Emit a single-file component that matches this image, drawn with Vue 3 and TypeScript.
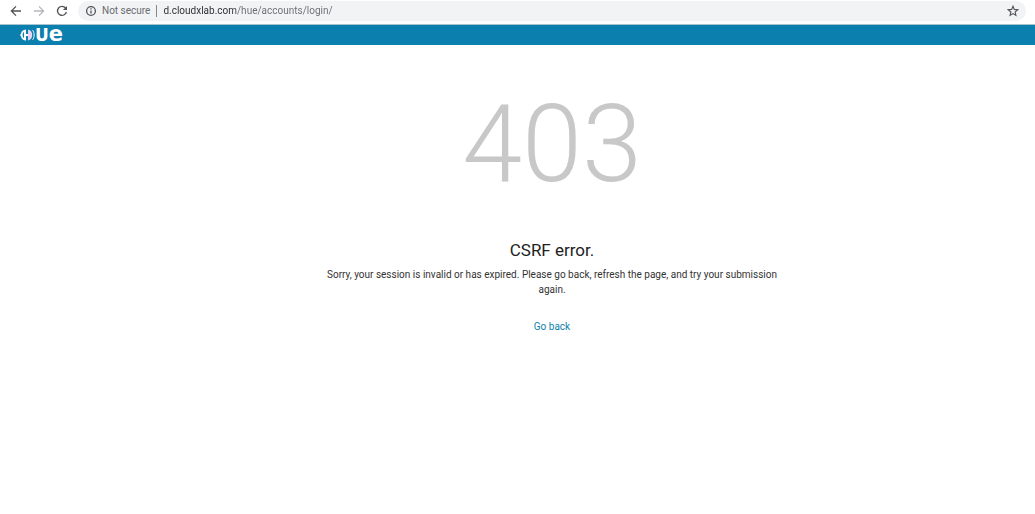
<script setup lang="ts">
import { ref } from 'vue'

const address = ref('d.cloudxlab.com/hue/accounts/login/')

function goBack(): void {
  window.history.back()
}
</script>

<template>
  <div class="page">
    <header class="toolbar">
      <nav class="nav" aria-label="Browser navigation">
        <button type="button" aria-label="Back">
          <svg viewBox="0 0 12 12"><path d="M11 6H1.6M6 1.4 1.4 6 6 10.6" /></svg>
        </button>
        <button type="button" class="disabled" aria-label="Forward" disabled>
          <svg viewBox="0 0 12 12"><path d="M1 6h9.4M6 1.4 10.6 6 6 10.6" /></svg>
        </button>
        <button type="button" aria-label="Reload">
          <svg viewBox="0 0 12 12">
            <path d="M9.6 3.1A4.5 4.5 0 1 0 10.4 7" />
            <path class="solid" d="M11 0.9V5H6.9Z" />
          </svg>
        </button>
      </nav>
      <div class="omnibox">
        <svg class="info" viewBox="0 0 12 12" aria-hidden="true">
          <circle cx="6" cy="6" r="4.4" />
          <path d="M6 5.4v3M6 3.3v1.1" />
        </svg>
        <label class="security" for="address">Not secure</label>
        <input id="address" v-model="address" class="address" type="text" spellcheck="false" />
        <button type="button" class="star" aria-label="Bookmark this page">
          <svg viewBox="0 0 12 12">
            <path d="M6 1.2 7.3 4.4 10.8 4.7 8.1 7 8.9 10.4 6 8.6 3.1 10.4 3.9 7 1.2 4.7 4.7 4.4Z" />
          </svg>
        </button>
      </div>
    </header>

    <div class="brandbar">
      <a class="brand" href="#" aria-label="Hue">
        <svg viewBox="0 0 15 12" aria-hidden="true">
          <path class="white" d="M6 .5C3 .7 1.3 2.4 1.1 4.6L0 6l1.1 1.4C1.3 9.6 3 11.3 6 11.5V7h2V5H6ZM4 2.8v6.4C3 8.400 2.600 7.200 2.600 6S3 3.600 4 2.800Z" />
          <path class="pink" d="M8 .5c3 .4 4.200 2.800 4.200 5.500S11 11.100 8 11.500Z" />
          <path class="arc" d="M12.600 1.200c2 2.200 2 7.400 0 9.600" />
        </svg>
        <span class="wordmark"><span class="initial">U</span>e</span>
      </a>
    </div>

    <main class="error">
      <div class="code">403</div>
      <h1>CSRF error.</h1>
      <p>Sorry, your session is invalid or has expired. Please go back, refresh the page, and try your submission again.</p>
      <a class="back" href="#" @click.prevent="goBack">Go back</a>
    </main>
  </div>
</template>

<style>
body {
  margin: 0;
  background: #fff;
}
</style>

<style scoped>
.page {
  font-family: Roboto, "Liberation Sans", sans-serif;
  color: #333;
}

.toolbar {
  display: flex;
  align-items: center;
  height: 25px;
  padding: 0 9px 3px 10px;
  border-bottom: 1px solid #a9c3cf;
  box-sizing: border-box;
}

.nav {
  display: flex;
  gap: 11px;
  margin-right: 10px;
}

button {
  display: flex;
  padding: 0;
  border: 0;
  background: none;
  cursor: pointer;
}

svg {
  display: block;
  width: 12px;
  height: 12px;
  fill: none;
  stroke: #505357;
  stroke-width: 1.3;
}

.disabled svg {
  stroke: #b5b7ba;
}

.solid {
  fill: #505357;
  stroke: none;
}

.omnibox {
  display: flex;
  flex: 1;
  align-items: center;
  height: 20px;
  padding: 0 7px;
  border-radius: 10px;
  background: #f1f3f4;
  font-size: 10px;
}

.info {
  margin-right: 5px;
}

.security {
  padding-right: 6px;
  border-right: 1px solid #84888c;
  color: #696c70;
  line-height: 12px;
  white-space: nowrap;
}

.address {
  flex: 1;
  min-width: 0;
  height: 18px;
  margin-left: 6px;
  padding: 0;
  border: 0;
  outline: 0;
  background: linear-gradient(to right, #292b2e 73px, #696c70 73px);
  background-clip: text;
  -webkit-background-clip: text;
  color: transparent;
  caret-color: #292b2e;
  font: inherit;
}

.star svg {
  stroke-width: 1.1;
}

.brandbar {
  display: flex;
  align-items: center;
  height: 20px;
  padding-left: 20px;
  background: #0b7fad;
}

.brand {
  display: flex;
  align-items: center;
  color: #fff;
  font: bold 21px/20px "DejaVu Sans", sans-serif;
  text-decoration: none;
}

.brand svg {
  width: 15px;
  stroke: none;
}

.wordmark {
  height: 20px;
  line-height: 18px;
}

.initial {
  font-size: 17px;
}

.white {
  fill: #fff;
}

.pink {
  fill: #e8d5f4;
}

.brand .arc {
  stroke: #fff;
  stroke-width: 1;
}

.error {
  display: flex;
  flex-direction: column;
  align-items: center;
  max-width: 460px;
  margin: 0 auto;
  padding: 39px 0 0 69px;
  text-align: center;
}

.code {
  color: #c8c8c8;
  font-size: 108px;
  font-weight: 300;
  line-height: 120px;
}

h1 {
  margin: 34px 0 0;
  color: #222;
  font-size: 17px;
  font-weight: 400;
  line-height: 24px;
}

p {
  margin: 5px 0 0;
  font-size: 10px;
  line-height: 15px;
}

.back {
  margin-top: 22px;
  color: #0b7fad;
  font-size: 10px;
  line-height: 15px;
  text-decoration: none;
}
</style>
